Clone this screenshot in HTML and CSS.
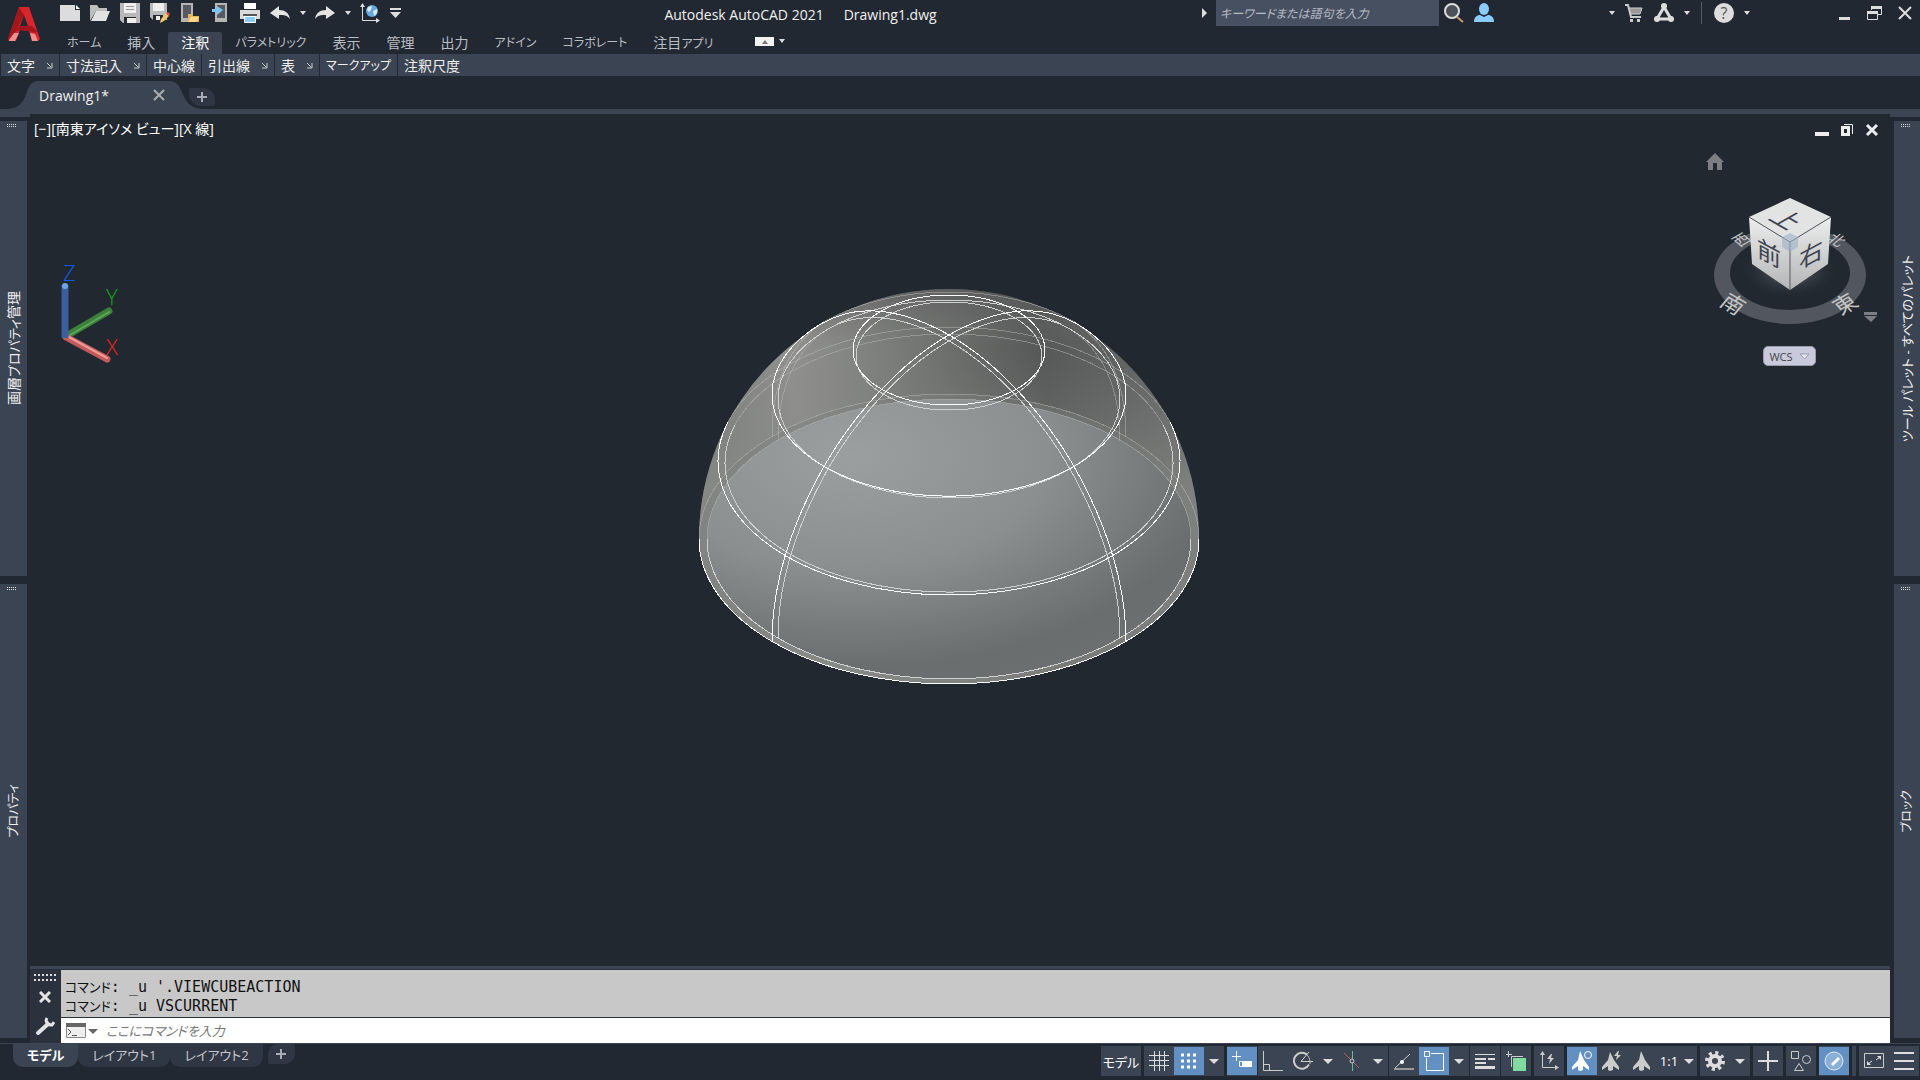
FILE: index.html
```html
<!DOCTYPE html>
<html lang="ja">
<head>
    <meta charset="UTF-8">
    <meta name="viewport" content="width=device-width, initial-scale=1.0">
    <title>Autodesk AutoCAD 2021 - Drawing1.dwg</title>
    <link rel="stylesheet" href="styles.css">
</head>
<body>
 <header>
    <button class="logo" aria-label="アプリケーション メニュー">
        <svg width="34" height="36" viewBox="0 0 34 36">
            <path fill="#d8262c" d="M12 1h10l11 32-2 2h-6l-3-10-9-1-4 11H2l-1-2z"/>
            <path fill="#a3161b" d="M12 1l5 8-9 18-6 8-1-2zM9 25l4-6 12 1 5 5-1 2-7-2-9-1z"/>
            <path fill="#232932" d="M17 9l4 11h-8z"/>
            <path fill="#ef8f90" d="M2 34l5-7h5l-4 8H2zM25 35l-2-8 5 1 3 7z"/>
        </svg>
    </button>
    <div class="head">
        <div class="titlebar">
            <div class="quick">
                <button aria-label="新規"><svg width="20" height="20"><path fill="#dcdcdc" d="M0 2h15v5h5v11H0z"/><path fill="#fff" d="M16 2l4 4h-4z"/></svg></button>
                <button aria-label="開く"><svg width="20" height="20"><path fill="#bdbdbd" d="M0 18V2h7l2 3h8v3H6z"/><path fill="#e2e2e2" d="M6 8h14l-4 10H1z"/></svg></button>
                <button aria-label="上書き保存"><svg width="20" height="20"><path fill="#b9b9b9" d="M0 0h20v20H3l-3-3z"/><path fill="#eee" d="M4 0h12v10H4z"/><path fill="#232932" d="M4 14h12v6H4z"/><path fill="#eee" d="M7 15h9v5H7z"/><path stroke="#999" d="M6 3.500h8M6 6.500h8"/></svg></button>
                <button aria-label="名前を付けて保存"><svg width="20" height="20"><path fill="#b9b9b9" d="M0 0h17v17H3l-3-3z"/><path fill="#eee" d="M3 0h11v8H3z"/><path fill="#232932" d="M3 12h10v5H3z"/><path fill="#eee" d="M6 13h4v4H6z"/><path fill="#f1c46a" d="M16 10l3 3-5 5-4 2 1-4z"/><path fill="#e0503c" d="M16 10l2-1 2 2-1 2z"/></svg></button>
                <button aria-label="モバイルから開く"><svg width="20" height="20"><path fill="#b5b5b5" d="M1 0h12v19H1z"/><path fill="#555a62" d="M3 2h8v13H3z"/><path fill="#e8b45a" d="M8 11h4l1 2h6v6H8z"/><path fill="#ffd78a" d="M11 14h8l-3 5H8z"/></svg></button>
                <button aria-label="モバイルに保存"><svg width="20" height="20"><path fill="#b5b5b5" d="M5 0h12v19H5z"/><path fill="#555a62" d="M7 2h8v13H7z"/><path fill="#7cc4f5" d="M2 6h5V3l6 4-6 5V9H2z"/></svg></button>
                <button aria-label="印刷"><svg width="20" height="20"><path fill="#fff" d="M4 0h12v6H4z"/><path fill="#dadada" d="M0 7h20v9H0z"/><path fill="#555" d="M3 11h14v2H3z"/><path fill="#8cccf8" stroke="#fff" d="M4.500 13.500h11v6h-11z"/></svg></button>
                <button aria-label="元に戻す"><svg width="20" height="20"><path fill="#e4e4e4" d="M0 10l9-7v4c6 0 10 3 11 9-3-4-6-4-11-4v4z"/></svg></button>
                <button class="narrow" aria-label="元に戻す 履歴"><i class="caret"></i></button>
                <button aria-label="やり直し"><svg width="20" height="20"><path fill="#e4e4e4" d="M20 10l-9-7v4C5 7 1 10 0 16c3-4 6-4 11-4v4z"/></svg></button>
                <button class="narrow" aria-label="やり直し 履歴"><i class="caret"></i></button>
                <button aria-label="UCS"><svg width="20" height="20"><path fill="none" stroke="#ddd" d="M2.500 3v14.500H17"/><path fill="#ddd" d="M0 4l2.500-4L5 4zM16 15l4 2.500-4 2.500z"/><circle cx="12" cy="8" r="6" fill="#64a8dc"/><path fill="#d8ecf8" d="M8 4l4-1-1 4-2 2-2-2zM13 8l4-2v4l-3 3z"/></svg></button>
                <button class="narrow customize" aria-label="クイック アクセスのカスタマイズ"><svg width="11" height="10"><path fill="#ddd" d="M0 0h11v2H0zM0 4h11L5.500 10z"/></svg></button>
            </div>
            <h1><span>Autodesk AutoCAD 2021</span><span>Drawing1.dwg</span></h1>
            <div class="infocenter">
                <button class="fold" aria-label="折りたたむ"><svg width="6" height="10"><path fill="#ddd" d="M0 0l5 5-5 5z"/></svg></button>
                <input type="search" aria-label="検索" placeholder="キーワードまたは語句を入力">
                <button aria-label="検索"><svg width="20" height="20"><circle cx="8" cy="8" r="7" fill="#4a5159" stroke="#ddd" stroke-width="2"/><path stroke="#c89a66" stroke-width="2" d="M13 14l6 5"/></svg></button>
                <button aria-label="サインイン"><svg width="20" height="20"><path fill="#8accff" d="M0 19c0-5 3-7 6-7l4 2 4-2c3 0 6 2 6 7z"/><ellipse cx="10" cy="6" rx="5" ry="6" fill="#8accff"/></svg></button>
            </div>
            <div class="account">
                <button class="narrow" aria-label="アカウント"><i class="caret"></i></button>
                <button aria-label="ストア"><svg width="18" height="18"><path fill="none" stroke="#ccc" stroke-width="2" d="M0 1h3l3 12h10"/><path fill="#999" stroke="#ccc" d="M4 4h13l-2 6H6z"/><path fill="#ccc" d="M5 15h3v3H5zM12 15h3v3h-3z"/></svg></button>
                <button aria-label="Autodesk App Store"><svg width="20" height="20"><path fill="none" stroke="#ddd" stroke-width="3" d="M10 4L3 16h14z"/><circle cx="10" cy="3" r="3" fill="#ddd"/><circle cx="3" cy="16" r="3" fill="#ddd"/><circle cx="17" cy="16" r="3" fill="#ddd"/></svg></button>
                <button class="narrow" aria-label="アプリ メニュー"><i class="caret"></i></button>
                <i class="sep"></i>
                <button class="help" aria-label="ヘルプ"><span>?</span></button>
                <button class="narrow" aria-label="ヘルプ メニュー"><i class="caret"></i></button>
            </div>
            <div class="window">
                <button aria-label="最小化"><svg width="14" height="14"><path fill="#ddd" d="M1 11h11v3H1z"/></svg></button>
                <button aria-label="元に戻す"><svg width="16" height="14"><path fill="none" stroke="#ddd" d="M4.500 4V1.500h10v7H11M.500 6.500h10v7H.500z"/><path fill="#ddd" d="M4 0h11v3H4zM0 5h11v3H0z"/></svg></button>
                <button aria-label="閉じる"><svg width="14" height="14"><path stroke="#ddd" stroke-width="2" d="M1 1l12 12M13 1L1 13"/></svg></button>
            </div>
        </div>
        <nav>
            <a href="#" class="kana">ホーム</a>
            <a href="#">挿入</a>
            <a href="#" class="active">注釈</a>
            <a href="#" class="kana">パラメトリック</a>
            <a href="#">表示</a>
            <a href="#">管理</a>
            <a href="#">出力</a>
            <a href="#" class="kana">アドイン</a>
            <a href="#" class="kana">コラボレート</a>
            <a href="#">注目<span class="kana">アプリ</span></a>
            <button class="ribbon-toggle" aria-label="リボンを最小化"><svg width="19" height="9"><path fill="#f2f2f2" d="M0 0h19v9H0z"/><path fill="#777" d="M7 7l3-4 3 4z"/></svg></button>
            <button class="narrow" aria-label="リボン表示"><i class="caret"></i></button>
        </nav>
    </div>
 </header>

 <div class="panels">
    <button>文字<svg width="7" height="7"><path class="launch" d="M1 1l4 4M6 1v5H1"/></svg></button>
    <button>寸法記入<svg width="7" height="7"><path class="launch" d="M1 1l4 4M6 1v5H1"/></svg></button>
    <button>中心線</button>
    <button>引出線<svg width="7" height="7"><path class="launch" d="M1 1l4 4M6 1v5H1"/></svg></button>
    <button>表<svg width="7" height="7"><path class="launch" d="M1 1l4 4M6 1v5H1"/></svg></button>
    <button class="kana">マークアップ</button>
    <button class="last">注釈尺度</button>
 </div>

 <div class="files">
    <div class="file">
        <a href="#">Drawing1*</a>
        <button aria-label="図面を閉じる"><svg width="12" height="12"><path stroke="#a9adb3" stroke-width="2" d="M1 1l10 10M11 1L1 11"/></svg></button>
    </div>
    <button class="newfile" aria-label="新しい図面"><svg width="10" height="10"><path fill="#a9adb3" d="M4 0h2v4h4v2H6v4H4V6H0V4h4z"/></svg></button>
 </div>

 <main>
    <aside>
        <section class="upper"><i class="grip"></i><h2>画層<span class="kana">プロパティ</span>管理</h2></section>
        <section class="lower"><i class="grip"></i><h2 class="kana">プロパティ</h2></section>
    </aside>

    <div class="center">
        <div class="viewport">
            <div class="viewbar">
                <p><span>[−]</span><span>[南東アイソメ ビュー]</span><span>[X 線]</span></p>
                <div class="viewbtns">
                    <button aria-label="最小化"><svg width="14" height="14"><path fill="#eee" d="M0 9h14v4H0z"/></svg></button>
                    <button aria-label="元に戻す"><svg width="14" height="14"><path fill="none" stroke="#eee" d="M4 1.500h8.500V11"/><path fill="none" stroke="#eee" stroke-width="3" d="M2.500 4.500h6v7h-6z"/></svg></button>
                    <button aria-label="閉じる"><svg width="14" height="14"><path stroke="#eee" stroke-width="3" d="M2 2l10 10M12 2L2 12"/></svg></button>
                </div>
            </div>

            <!-- UCS icon -->
            <svg class="ucs" width="70" height="110" viewBox="0 0 70 110">
                <path stroke="#3c8039" stroke-width="7" stroke-linecap="round" d="M11 77l41-24"/>
                <path stroke="#5ea65a" stroke-width="2" stroke-linecap="round" d="M13 77l39-23"/>
                <path stroke="#c15a5a" stroke-width="7" stroke-linecap="round" d="M9 79l41 22"/>
                <path stroke="#f29a9a" stroke-width="2" stroke-linecap="round" d="M10 78l40 22"/>
                <path stroke="#3a5f9b" stroke-width="7" d="M8 27v53"/>
                <circle cx="8" cy="28" r="3" fill="#6fa6ea"/>
                <text x="6" y="23" fill="#0b5ff0">Z</text>
                <text x="49" y="47" fill="#16a916">Y</text>
                <text x="49" y="97" fill="#f02323">X</text>
            </svg>

            <!-- hemisphere, origin is the centre of the base circle -->
            <svg class="dome" width="520" height="410" viewBox="-260 -255 520 410">
                <defs>
                    <linearGradient id="shell" x1="0" y1=".4" x2="1" y2=".3">
                        <stop offset="0" stop-color="#7b7d7b"/>
                        <stop offset=".2" stop-color="#929391"/>
                        <stop offset=".42" stop-color="#797b79"/>
                        <stop offset=".7" stop-color="#555856"/>
                        <stop offset="1" stop-color="#6a6d6b"/>
                    </linearGradient>
                    <linearGradient id="lift" x1="0" y1="0" x2="0" y2="1">
                        <stop offset="0" stop-color="#555" stop-opacity=".6"/>
                        <stop offset=".15" stop-color="#777" stop-opacity="0"/>
                        <stop offset=".5" stop-color="#8c8f8c" stop-opacity=".6"/>
                    </linearGradient>
                    <radialGradient id="inside" cx=".3" cy=".2" r=".9">
                        <stop offset="0" stop-color="#9b9fa0"/>
                        <stop offset=".45" stop-color="#8b8f90"/>
                        <stop offset=".85" stop-color="#6a6d6e"/>
                        <stop offset="1" stop-color="#6e7071"/>
                    </radialGradient>
                </defs>
                <path fill="url(#shell)" d="M-250 0A250 250 0 0 1 250 0A250 145 0 0 1-250 0z"/>
                <path fill="url(#lift)" d="M-250 0A250 250 0 0 1 250 0A250 145 0 0 1-250 0z"/>
                <ellipse rx="250" ry="145" fill="#7c7f7e" fill-opacity=".4"/>
                <ellipse rx="242" ry="140" fill="url(#inside)"/>
                <g class="faint">
                    <path d="M-250 0A250 145 0 0 1 250 0"/>
                    <path d="M-242 0A242 140 0 0 1 242 0"/>
                    <ellipse cy="-78" rx="231" ry="134"/>
                    <ellipse cy="-76" rx="224" ry="129"/>
                    <ellipse cy="-145" rx="177" ry="102"/>
                    <path d="M-125-217C-160-195-177-155-177-102M125-217C160-195 177-155 177-102"/>
                    <path d="M-121-210C-155-188-171-150-171-98M121-210C155-188 171-150 171-98"/>
                </g>
                <g class="inner">
                    <path d="M-242 0A242 140 0 0 0 242 0"/>
                    <path d="M-214-114A224 129 0 1 0 214-114"/>
                    <ellipse cy="-140" rx="171" ry="99"/>
                    <ellipse cy="-183" rx="93" ry="54"/>
                    <path d="M-1 0A1 1 0 0 0 .707 .707" transform="matrix(171 -99 0 -198 0 0)"/>
                    <path d="M-1 0A1 1 0 0 0 .707 .707" transform="matrix(-171 -99 0 -198 0 0)"/>
                </g>
                <g class="outer">
                    <path d="M-250 0A250 145 0 0 0 250 0"/>
                    <path d="M-221-117A231 134 0 1 0 221-117"/>
                    <path d="M-125-217A177 102 0 1 0 125-217"/>
                    <ellipse cy="-189" rx="96" ry="55"/>
                    <path d="M-1 0A1 1 0 0 0 .707 .707" transform="matrix(177 -102 0 -204 0 0)"/>
                    <path d="M-1 0A1 1 0 0 0 .707 .707" transform="matrix(-177 -102 0 -204 0 0)"/>
                </g>
            </svg>

            <!-- view cube -->
            <div class="cube">
                <svg width="180" height="180" viewBox="0 0 180 180">
                    <defs>
                        <linearGradient id="face" x1="0" y1="0" x2="0" y2="1">
                            <stop offset="0" stop-color="#eceded"/>
                            <stop offset="1" stop-color="#b4b5b6"/>
                        </linearGradient>
                        <radialGradient id="glow">
                            <stop offset="0" stop-color="#6b727b"/>
                            <stop offset="1" stop-color="#212830" stop-opacity="0"/>
                        </radialGradient>
                    </defs>
                    <path fill="#7b7e82" d="M6 11l9-9 9 9h-2v8h-5v-7h-4v7H8v-8z"/>
                    <path fill="#52575f" fill-rule="evenodd" d="M14 124a76 49 0 0 1 152 0a76 49 0 0 1-152 0zM30 122a60 37 0 0 0 120 0a60 37 0 0 0-120 0z"/>
                    <ellipse cx="90" cy="120" rx="50" ry="28" fill="url(#glow)"/>
                    <g class="compass">
                        <text transform="translate(42 89) rotate(-30) skewX(20)" y="5">西</text>
                        <text transform="translate(136 89) rotate(30) skewX(-20)" y="5">北</text>
                        <text class="near" transform="translate(33 153) rotate(30) skewX(-10)" y="8">南</text>
                        <text class="near" transform="translate(145 153) rotate(-30) skewX(10)" y="8">東</text>
                    </g>
                    <path fill="#e2e3e3" d="M90 47l41 19-41 25-41-25z"/>
                    <path fill="url(#face)" d="M49 66l41 25v48l-38-26zM131 66L90 91v48l38-26z"/>
                    <path fill="none" stroke="#555a60" d="M49 66l41 25 41-25M90 91v48"/>
                    <path fill="#9fb0c6" fill-opacity=".6" d="M90 82l8 4v10l-8 5-8-5V86z"/>
                    <g class="faces">
                        <text transform="translate(86 69) rotate(30) skewX(-30)" y="8">上</text>
                        <text transform="translate(69 102) skewY(28)" y="9">前</text>
                        <text transform="translate(111 103) skewY(-28)" y="9">右</text>
                    </g>
                    <path fill="#7b7e82" d="M164 161h13v3h-13zM164 165h13l-6 6z"/>
                </svg>
                <button class="wcs">WCS <svg width="11" height="7"><path fill="#e8e8f2" stroke="#999baa" d="M1 1h9L5.500 6z"/></svg></button>
            </div>
        </div>

        <div class="command">
            <div class="cmdgrip">
                <svg width="22" height="7"><path stroke="#ddd" stroke-width="2" stroke-dasharray="2 2" d="M0 1h22M0 6h22"/></svg>
                <button aria-label="閉じる"><svg width="12" height="12"><path stroke="#e4e4e4" stroke-width="3" d="M1 1l10 10M11 1L1 11"/></svg></button>
                <button aria-label="カスタマイズ"><svg width="20" height="20"><path stroke="#e4e4e4" stroke-width="4" stroke-linecap="round" d="M3 17L13 8"/><path fill="none" stroke="#e4e4e4" stroke-width="3" d="M12 2c-2 3 0 7 5 7l2-3M12 5v3l3 1"/></svg></button>
            </div>
            <div class="cmdbody">
                <div class="history">
                    <p><span class="kana">コマンド</span>: _u '.VIEWCUBEACTION</p>
                    <p><span class="kana">コマンド</span>: _u VSCURRENT</p>
                </div>
                <div class="prompt">
                    <button aria-label="最近使用したコマンド"><svg width="32" height="16"><path fill="#eee" stroke="#888" d="M.500 .500h19v14H.500z"/><path fill="#666" d="M0 0h20v4H0z"/><path fill="none" stroke="#555" d="M2 6l3 3-3 3M6 12.500h5"/><path fill="#666" d="M22 6h10l-5 5z"/></svg></button>
                    <input type="text" aria-label="コマンド" placeholder="ここにコマンドを入力">
                </div>
            </div>
        </div>
    </div>

    <aside class="right">
        <section class="upper"><i class="grip"></i><h2 class="kana">ツール パレット - すべてのパレット</h2></section>
        <section class="lower"><i class="grip"></i><h2 class="kana">ブロック</h2></section>
    </aside>
 </main>

 <footer>
    <div class="layouts">
        <a href="#" class="active">モデル</a>
        <a href="#">レイアウト1</a>
        <a href="#">レイアウト2</a>
        <button aria-label="新しいレイアウト"><svg width="10" height="10"><path fill="#a9adb3" d="M4 0h2v4h4v2H6v4H4V6H0V4h4z"/></svg></button>
    </div>
    <div class="status">
        <div class="group"><button class="text wide">モデル</button></div>
        <div class="group">
            <button aria-label="グリッド"><svg width="20" height="20"><path stroke="#ddd" d="M5.500 0v20M10.500 0v20M15.500 0v20M0 4.500h20M0 9.500h20M0 14.500h20"/></svg></button>
            <button class="on" aria-label="スナップ"><svg width="16" height="16"><path stroke="#fff" stroke-width="3" stroke-dasharray="3 3" d="M0 2h16M0 8h16M0 14h16"/></svg></button>
            <button class="drop" aria-label="スナップ設定"><i class="caret big"></i></button>
        </div>
        <div class="group"><button class="on" aria-label="ダイナミック入力"><svg width="20" height="20"><path stroke="#fff" d="M4.500 0v10M0 5.500h9"/><path fill="none" stroke="#fff" d="M7.500 10.500h12v5h-12z"/><path fill="#fff" d="M10 10h10v6H10z"/></svg></button></div>
        <div class="group tight">
            <button aria-label="直交モード"><svg width="20" height="20"><path fill="none" stroke="#ccc" d="M.500 0v19.500H20M.500 13.500h6v6"/></svg></button>
            <button aria-label="極トラッキング"><svg width="20" height="20"><path fill="none" stroke="#ccc" stroke-width="2" d="M14 3.500a8 8 0 1 0 2 10"/><path stroke="#ccc" d="M8 10.500L16 1M8 10.500h12"/><path fill="none" stroke="#ccc" d="M14 4c2 2 3 4 3 9"/></svg></button>
            <button class="drop" aria-label="極設定"><i class="caret big"></i></button>
            <button aria-label="アイソメ"><svg width="20" height="20"><path stroke="#5dc48a" d="M9.500 0v20"/><path stroke="#b75c66" d="M1 2l15 15"/><circle cx="9" cy="10" r="2" fill="#3b4453" stroke="#ccc"/></svg></button>
            <button class="drop" aria-label="アイソメ設定"><i class="caret big"></i></button>
        </div>
        <div class="group tight">
            <button aria-label="オブジェクト スナップ トラッキング"><svg width="20" height="20"><path fill="none" stroke="#999" stroke-width="2" d="M0 18h20"/><path stroke="#ccc" d="M1 17L16 3"/><circle cx="8" cy="11" r="2" fill="#fff"/></svg></button>
            <button class="on" aria-label="オブジェクト スナップ"><svg width="22" height="22"><path fill="none" stroke="#fff" d="M8 3.500h12.500v17h-17V8"/><path fill="none" stroke="#fff" d="M1.500 1.500h5v5h-5z"/></svg></button>
            <button class="drop" aria-label="オブジェクト スナップ設定"><i class="caret big"></i></button>
        </div>
        <div class="group tight">
            <button aria-label="線の太さ"><svg width="20" height="17"><path stroke="#ddd" d="M0 1.500h20"/><path stroke="#ddd" stroke-width="2" d="M0 6h11M0 10h11M13 6h7"/><path stroke="#ddd" stroke-width="3" d="M0 14.500h20"/></svg></button>
        </div>
        <div class="group tight"><button aria-label="選択の循環"><svg width="20" height="20"><path stroke="#ccc" d="M2.500 0v6M0 3.500h6"/><path fill="none" stroke="#ccc" d="M5.500 16V5.500H17"/><path fill="#80dba0" d="M7 7h13v13H7z"/></svg></button></div>
        <div class="group"><button aria-label="ダイナミック UCS"><svg width="20" height="20"><path fill="none" stroke="#ccc" d="M3.500 2v14.500H18"/><path fill="#ccc" d="M1 4l2.500-4L6 4zM16 14l4 2.500-4 2.500zM12 3L8 8h3l-1 5 5-6h-3l1-4z"/></svg></button></div>
        <div class="group">
            <button class="on" aria-label="注釈の可視性"><svg width="20" height="20"><path fill="#fff" d="M8 0l4 9 5 7v3l-6-4v4l-3 1-2-1v-4l-6 4v-3l6-7z"/><circle cx="16" cy="4" r="3.500" fill="none" stroke="#fff"/></svg></button>
            <button aria-label="自動尺度"><svg width="20" height="20"><path fill="#ccc" d="M8 1l4 8 5 7v3l-6-4v4l-3 1-2-1v-4l-6 4v-3l6-7zM16 0l-4 5h3l-1 4 5-5h-3l1-4z"/></svg></button>
            <button aria-label="注釈尺度"><svg width="20" height="20"><path fill="#ccc" d="M9 0l4 9 5 7v3l-6-4v4l-3 1-2-1v-4l-6 4v-3l6-7z"/></svg></button>
            <button class="text wide">1:1 <i class="caret big"></i></button>
        </div>
        <div class="group">
            <button aria-label="ワークスペース"><svg width="20" height="20"><circle cx="10" cy="10" r="8" fill="none" stroke="#ddd" stroke-width="4" stroke-dasharray="3 3.280"/><circle cx="10" cy="10" r="5" fill="none" stroke="#ddd" stroke-width="4"/></svg></button>
            <button class="drop" aria-label="ワークスペース設定"><i class="caret big"></i></button>
        </div>
        <div class="group"><button aria-label="注釈モニター"><svg width="20" height="20"><path fill="#ddd" d="M9 0h2v9h9v2h-9v9H9v-9H0V9h9z"/></svg></button></div>
        <div class="group"><button aria-label="選択表示"><svg width="20" height="20"><path fill="none" stroke="#ccc" d="M.500 .500h7v7h-7zM8 12.500l4.500 7h-9z"/><circle cx="15.500" cy="8.500" r="4" fill="none" stroke="#ccc"/></svg></button></div>
        <div class="group"><button class="on" aria-label="グラフィックス パフォーマンス"><svg width="20" height="20"><circle cx="10" cy="10" r="9" fill="#8ab0d8" stroke="#dfe8f2"/><path stroke="#fff" stroke-width="3" d="M8 14l7-7"/></svg></button></div>
        <i class="sliver"></i>
        <div class="group">
            <button aria-label="フルスクリーン"><svg width="20" height="16"><path fill="none" stroke="#ccc" d="M.500 .500h19v14H.500z"/><path fill="#ddd" d="M17 3v4l-4-4zM3 12V8l4 4z"/><path stroke="#ddd" d="M16 4l-4 3M4 11l4-3"/></svg></button>
            <button aria-label="カスタマイズ"><svg width="20" height="18"><path stroke="#ddd" stroke-width="2" d="M0 1h20M0 9h20M0 17h20"/></svg></button>
        </div>
    </div>
 </footer>
</body>
</html>
```
FILE: styles.css
```css
*{
    margin: 0;
    padding: 0;
    box-sizing: border-box;
}

body{
    height: 100vh;
    display: flex;
    flex-direction: column;
    overflow: hidden;
    background-color: #222831;
    color: #f0f0f0;
    font-family: "Open Sans", "Noto Sans CJK JP", sans-serif;
    font-size: 14px;
    font-feature-settings: "palt";
}

button, input{
    border: none;
    background: none;
    color: inherit;
    font: inherit;
    font-feature-settings: "palt";
}

button{
    display: flex;
    align-items: center;
    justify-content: center;
    flex: none;
    white-space: nowrap;
}

a{
    color: inherit;
    text-decoration: none;
    white-space: nowrap;
}

h1, h2{
    font-weight: normal;
}

svg{
    flex: none;
    display: block;
}

.kana{
    font-size: 12px;
}

.caret{
    border: 3px solid transparent;
    border-top: 4px solid #dddddd;
    border-bottom: none;
}

.caret.big{
    border-width: 5px 5px 0 5px;
}

/* title bar and ribbon tabs */
header{
    display: flex;
    height: 54px;
    flex: none;
}

.logo{
    width: 48px;
    height: 48px;
}

.head{
    flex: 1;
}

.titlebar{
    display: flex;
    align-items: center;
    height: 26px;
}

.titlebar button{
    width: 30px;
    height: 26px;
}

.titlebar .narrow, nav .narrow{
    width: 15px;
}

.titlebar .customize{
    width: 20px;
}

.quick, .infocenter, .account, .window{
    display: flex;
    align-items: center;
}

.quick{
    padding-left: 7px;
}

h1{
    flex: 1;
    display: flex;
    justify-content: center;
    gap: 20px;
    padding: 4px 0 0 2px;
    font-size: 14px;
    line-height: 24px;
    white-space: nowrap;
}

.titlebar .fold{
    width: 22px;
}

.infocenter input{
    width: 223px;
    height: 26px;
    padding: 0 4px;
    background-color: #475061;
    font-size: 12px;
    font-style: italic;
}

.infocenter input::placeholder{
    color: #b6bac2;
}

.account{
    margin-left: 105px;
    margin-right: 76px;
}

.sep{
    width: 1px;
    height: 22px;
    margin: 0 7px;
    background-color: #555c68;
}

.help span{
    width: 20px;
    height: 20px;
    border-radius: 50%;
    background-color: #dddddd;
    color: #555555;
    font-size: 16px;
    line-height: 20px;
}

nav{
    display: flex;
    height: 28px;
    padding: 6px 0 0 6px;
    color: #b9bdc4;
}

nav a{
    padding: 0 13px;
    line-height: 21px;
}

nav .active{
    background-color: #3b4453;
    border-radius: 2px 2px 0 0;
    color: #ffffff;
}

nav button{
    height: 18px;
}

.ribbon-toggle{
    margin-left: 29px;
}

/* ribbon panel titles */
.panels{
    display: flex;
    flex: none;
    gap: 1px;
    height: 22px;
    padding-left: 1px;
}

.panels button{
    gap: 11px;
    padding: 0 6px;
    background-color: #3b4453;
}

.panels .last{
    flex: 1;
    justify-content: flex-start;
}

.launch{
    fill: none;
    stroke: #cccccc;
}

/* drawing tabs */
.files{
    display: flex;
    flex: none;
    align-items: flex-end;
    height: 38px;
    border-bottom: 5px solid #3b4453;
}

.file{
    display: flex;
    justify-content: space-between;
    align-items: center;
    width: 203px;
    height: 28px;
    padding: 0 38px 0 39px;
    background-color: #3b4453;
    clip-path: path("M8 28C32 26 22 1 38 0H170C186 1 178 26 202 28z");
}

.newfile{
    width: 26px;
    height: 18px;
    margin: 0 0 3px -14px;
    background-color: #2f3744;
    border-radius: 2px 12px 2px 12px;
}

/* palettes */
main{
    flex: 1;
    display: flex;
    min-height: 0;
}

aside{
    display: flex;
    flex-direction: column;
    gap: 8px;
    width: 30px;
    padding: 4px 3px 5px 0;
    border-top: 3px solid #3b4453;
}

.right{
    padding: 4px 0 5px 4px;
}

aside section{
    flex: 1;
    display: flex;
    flex-direction: column;
    align-items: center;
    justify-content: center;
    position: relative;
    background-color: #3b4453;
}

aside h2{
    writing-mode: vertical-rl;
    text-orientation: sideways;
    transform: rotate(180deg);
    line-height: 26px;
    font-size: 14px;
    white-space: nowrap;
}

aside h2.kana{
    font-size: 12px;
}

.upper .kana, .upper h2.kana{
    font-size: 13px;
}

.grip{
    position: absolute;
    top: 3px;
    left: 7px;
    width: 9px;
    height: 3px;
    background-image: repeating-linear-gradient(90deg, transparent 0 1px, #3b4453 1px 2px), linear-gradient(#dddddd 1px, transparent 1px 2px, #dddddd 2px);
}

/* drawing area */
.center{
    flex: 1;
    display: flex;
    flex-direction: column;
    min-width: 0;
}

.viewport{
    flex: 1;
    position: relative;
    background-color: #212830;
}

.viewbar{
    display: flex;
    justify-content: space-between;
    padding: 5px 6px 0 4px;
}

.viewbar p{
    color: #ffffff;
    line-height: 20px;
}

.viewbtns{
    display: flex;
    padding-top: 1px;
}

.viewbtns button{
    width: 25px;
    height: 20px;
}

.ucs{
    position: absolute;
    left: 27px;
    top: 144px;
    font-size: 22px;
    font-weight: 300;
}

.dome{
    position: absolute;
    left: calc(50% - 271px);
    top: 170px;
}

.dome g{
    fill: none;
    shape-rendering: crispEdges;
}

.dome path{
    vector-effect: non-scaling-stroke;
}

.faint{
    stroke: #b4b6b4;
    stroke-opacity: .5;
}

.inner{
    stroke: #cfd0d0;
}

.outer{
    stroke: #ffffff;
}

.cube{
    position: absolute;
    right: 10px;
    top: 37px;
}

.cube text{
    text-anchor: middle;
}

.compass{
    fill: #c4c4c4;
    font-size: 15px;
}

.near{
    font-size: 22px;
}

.faces{
    fill: #3d444f;
    font-size: 24px;
}

.wcs{
    gap: 6px;
    width: 53px;
    height: 20px;
    margin: 15px 0 0 63px;
    background-color: #c9c9dc;
    border: 1px solid #9a9aae;
    border-radius: 5px;
    color: #444444;
    font-size: 11px;
}

/* command line */
.command{
    display: flex;
    flex: none;
    height: 77px;
    border-top: 3px solid #3b4453;
    background-color: #2b323e;
}

.cmdgrip{
    display: flex;
    flex-direction: column;
    align-items: center;
    gap: 6px;
    width: 31px;
    padding: 5px 2px 0 0;
}

.cmdgrip button{
    width: 22px;
    height: 20px;
}

.cmdgrip button + button{
    margin-top: 3px;
}

.cmdbody{
    flex: 1;
    padding-top: 1px;
}

.history{
    height: 47px;
    padding: 8px 4px 0;
    background-color: #c8c8c8;
    color: #111111;
    font-family: "DejaVu Sans Mono", "Noto Sans CJK JP", monospace;
    font-size: 15px;
}

.history p{
    line-height: 19px;
}

.history .kana{
    font-size: 13px;
}

.prompt{
    display: flex;
    align-items: center;
    gap: 8px;
    height: 25px;
    margin-top: 1px;
    padding-left: 5px;
    background-color: #ffffff;
    color: #222222;
}

.prompt input{
    flex: 1;
    height: 24px;
    font-size: 13px;
    font-style: italic;
}

.prompt input::placeholder{
    color: #777777;
}

/* layout tabs and status bar */
footer{
    display: flex;
    flex: none;
    justify-content: space-between;
    height: 37px;
    border-top: 1px solid #3b4453;
}

.layouts{
    display: flex;
    height: 23px;
    padding-left: 13px;
}

.layouts a{
    padding: 0 14px;
    background-color: #2f3744;
    border-radius: 0 0 10px 10px;
    color: #c3c6cb;
    font-size: 13px;
    line-height: 22px;
}

.layouts .active{
    background-color: #3b4453;
    color: #ffffff;
    font-weight: bold;
}

.layouts button{
    width: 27px;
    height: 20px;
    margin-left: 5px;
    background-color: #2f3744;
    border-radius: 10px 2px 10px 2px;
}

.status{
    display: flex;
    gap: 3px;
    height: 30px;
    margin: 2px 1px 0 0;
}

.group{
    display: flex;
    align-items: center;
    background-color: #3b4453;
}

.group.tight{
    margin-left: -2px;
}

.group button{
    width: 30px;
    height: 28px;
}

.group .drop{
    width: 20px;
}

.group .wide{
    gap: 6px;
    width: 40px;
}

.group .text{
    color: #ffffff;
    font-size: 13px;
}

.group .on{
    background-color: #6290c3;
}

.sliver{
    width: 4px;
    background-color: #3b4453;
}
```
